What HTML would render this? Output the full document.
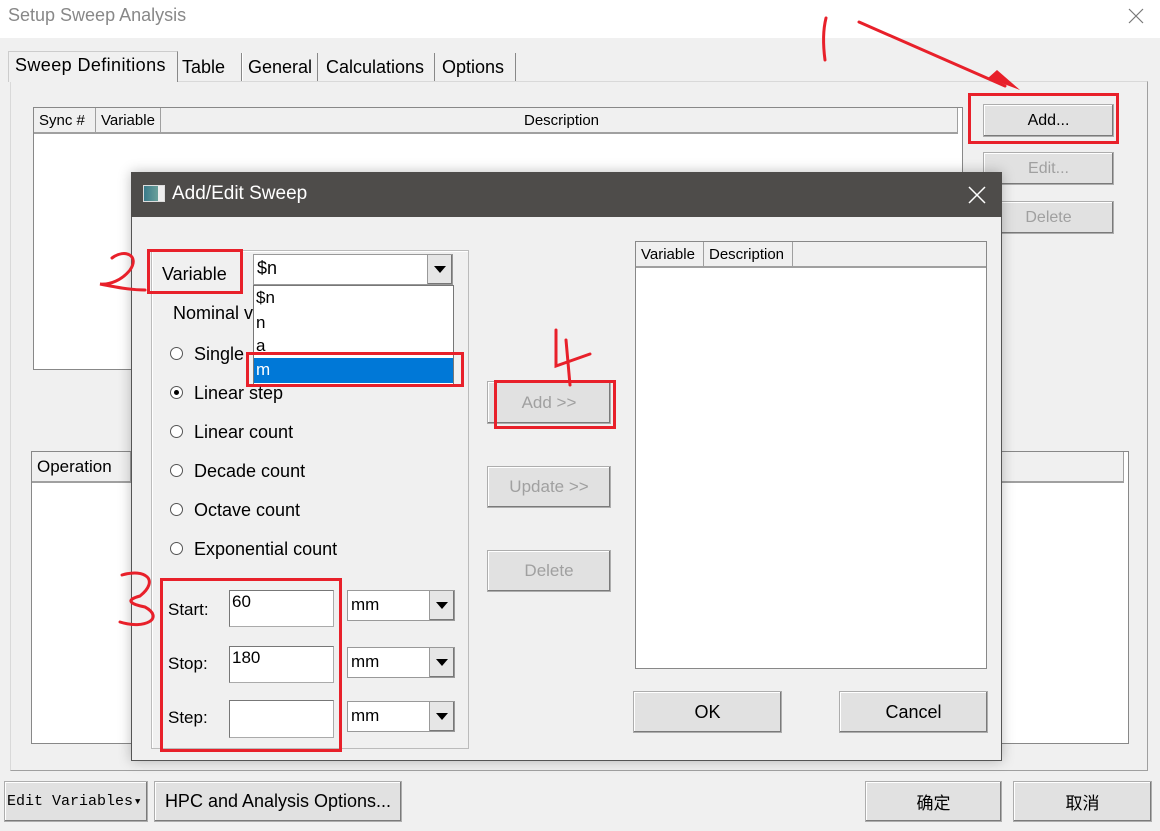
<!DOCTYPE html>
<html><head><meta charset="utf-8"><style>
*{box-sizing:border-box;margin:0;padding:0}
body{width:1160px;height:831px;background:#f0f0f0;position:relative;overflow:hidden;font-family:"Liberation Sans","Noto Sans CJK SC",sans-serif;color:#000}
.a{position:absolute}
.t{position:absolute;white-space:nowrap}
.btn{position:absolute;background:#e1e1e1;border:1px solid #adadad;box-shadow:inset -1px -1px 0 #7a7a7a,inset 1px 1px 0 #fff;display:flex;align-items:center;justify-content:center;font-size:16px}
.dis{color:#a0a0a0}
.hdr{position:absolute;background:#f0f0f0;border-right:1px solid #a0a0a0;border-bottom:2px solid #a0a0a0;font-size:15px;padding-left:5px;display:flex;align-items:center}
.red{position:absolute;border:3px solid #e8202a}
.radio{position:absolute;width:13px;height:13px;border-radius:50%;border:1px solid #555;background:#fff}
.inp{position:absolute;background:#fff;border:1px solid #aaa;border-top-color:#777;border-left-color:#777;font-size:16px;padding:1px 0 0 2px}
.cmb{position:absolute;background:#fff;border:1px solid #999;font-size:16px;padding:4px 0 0 3px}
.cmb .ar{position:absolute;right:0;top:0;bottom:0;width:25px;background:#e6e6e6;border-left:1px solid #999;box-shadow:inset -1px -1px 0 #777}
.cmb .ar:after{content:"";position:absolute;left:6px;top:11px;border-left:6px solid transparent;border-right:6px solid transparent;border-top:7px solid #000}
</style></head><body>
<div class="a" style="left:0;top:0;width:1160px;height:38px;background:#fff"></div>
<div class="t" style="left:8px;top:5px;font-size:18px;color:#888">Setup Sweep Analysis</div>
<svg class="a" style="left:1128px;top:8px" width="16" height="16"><path d="M1 1L15 15M15 1L1 15" stroke="#777" stroke-width="1.2"/></svg>

<!-- tab panel -->
<div class="a" style="left:10px;top:81px;width:1138px;height:690px;border:1px solid #d9d9d9;border-right-color:#a0a0a0;border-bottom-color:#a0a0a0"></div>
<div class="a" style="left:8px;top:51px;width:170px;height:31px;background:#f0f0f0;border:1px solid #ccc;border-bottom:none;border-right-color:#888"></div>
<div class="t" style="left:15px;top:55px;font-size:18px;letter-spacing:0.4px">Sweep Definitions</div>
<div class="a" style="left:178px;top:53px;width:64px;height:28px;border-right:1px solid #888"></div>
<div class="t" style="left:182px;top:57px;font-size:18px">Table</div>
<div class="a" style="left:242px;top:53px;width:76px;height:28px;border-right:1px solid #888;border-left:1px solid #fff"></div>
<div class="t" style="left:248px;top:57px;font-size:18px">General</div>
<div class="a" style="left:318px;top:53px;width:117px;height:28px;border-right:1px solid #888"></div>
<div class="t" style="left:326px;top:57px;font-size:18px">Calculations</div>
<div class="a" style="left:435px;top:53px;width:81px;height:28px;border-right:1px solid #888"></div>
<div class="t" style="left:442px;top:57px;font-size:18px">Options</div>

<!-- table 1 -->
<div class="a" style="left:33px;top:107px;width:930px;height:263px;background:#fff;border:1px solid #888"></div>
<div class="hdr" style="left:34px;top:108px;width:62px;height:26px">Sync #</div>
<div class="hdr" style="left:96px;top:108px;width:65px;height:26px">Variable</div>
<div class="hdr" style="left:161px;top:108px;width:797px;height:26px;justify-content:center">Description</div>
<div class="btn" style="left:983px;top:104px;width:131px;height:33px">Add...</div>
<div class="btn dis" style="left:983px;top:152px;width:131px;height:33px">Edit...</div>
<div class="btn dis" style="left:983px;top:201px;width:131px;height:33px">Delete</div>
<div class="red" style="left:968px;top:93px;width:151px;height:51px"></div>

<!-- table 2 -->
<div class="a" style="left:31px;top:451px;width:1098px;height:293px;background:#fff;border:1px solid #888"></div>
<div class="hdr" style="left:32px;top:452px;width:99px;height:31px;font-size:17px">Operation</div>
<div class="hdr" style="left:131px;top:452px;width:993px;height:31px"></div>

<!-- bottom -->
<div class="btn" style="left:4px;top:781px;width:144px;height:41px;font-family:'Liberation Mono',monospace;font-size:15px;justify-content:flex-start;padding-left:2px">Edit Variables<span style="font-size:9px;margin-left:2px">▼</span></div>
<div class="btn" style="left:154px;top:781px;width:248px;height:41px;font-size:18px">HPC and Analysis Options...</div>
<div class="btn" style="left:865px;top:781px;width:137px;height:41px;font-size:17px">确定</div>
<div class="btn" style="left:1013px;top:781px;width:139px;height:41px;font-size:17px">取消</div>

<!-- dialog -->
<div class="a" style="left:131px;top:172px;width:871px;height:589px;background:#f0f0f0;border:1px solid #555;box-shadow:0 0 12px rgba(0,0,0,.25)"></div>
<div class="a" style="left:131px;top:172px;width:871px;height:45px;background:#4e4c4a"></div>
<div class="a" style="left:143px;top:185px;width:22px;height:17px;background:linear-gradient(90deg,#3a7a8a,#7fb0a0);border:1px solid #ddd"></div>
<div class="a" style="left:158px;top:186px;width:6px;height:15px;background:#eee"></div>
<div class="t" style="left:172px;top:183px;font-size:19px;color:#fff">Add/Edit Sweep</div>
<svg class="a" style="left:968px;top:186px" width="18" height="18"><path d="M1 1L17 17M17 1L1 17" stroke="#fff" stroke-width="1.5"/></svg>

<div class="a" style="left:151px;top:250px;width:318px;height:499px;border:1px solid #bbb;box-shadow:inset 1px 1px 0 #fff"></div>
<div class="t" style="left:162px;top:264px;font-size:18px">Variable</div>
<div class="red" style="left:147px;top:249px;width:96px;height:45px"></div>
<div class="cmb" style="left:253px;top:254px;width:200px;height:31px;font-size:18px;padding-top:3px">$n<div class="ar"></div></div>
<div class="t" style="left:173px;top:303px;font-size:18px">Nominal v</div>
<div class="a" style="left:253px;top:285px;width:201px;height:101px;background:#fff;border:1px solid #777"></div>
<div class="t" style="left:256px;top:288px;font-size:17px">$n</div>
<div class="t" style="left:256px;top:313px;font-size:17px">n</div>
<div class="t" style="left:256px;top:336px;font-size:17px">a</div>
<div class="a" style="left:254px;top:358px;width:199px;height:25px;background:#0078d7"></div>
<div class="t" style="left:256px;top:360px;font-size:17px;color:#fff">m</div>
<div class="red" style="left:246px;top:352px;width:218px;height:35px"></div>

<div class="radio" style="left:170px;top:347px"></div><div class="t" style="left:194px;top:344px;font-size:18px">Single</div>
<div class="radio" style="left:170px;top:386px"></div><div class="a" style="left:174px;top:390px;width:5px;height:5px;border-radius:50%;background:#000"></div><div class="t" style="left:194px;top:383px;font-size:18px">Linear step</div>
<div class="radio" style="left:170px;top:425px"></div><div class="t" style="left:194px;top:422px;font-size:18px">Linear count</div>
<div class="radio" style="left:170px;top:464px"></div><div class="t" style="left:194px;top:461px;font-size:18px">Decade count</div>
<div class="radio" style="left:170px;top:503px"></div><div class="t" style="left:194px;top:500px;font-size:18px">Octave count</div>
<div class="radio" style="left:170px;top:542px"></div><div class="t" style="left:194px;top:539px;font-size:18px">Exponential count</div>

<div class="t" style="left:168px;top:600px;font-size:17px">Start:</div>
<div class="inp" style="left:229px;top:590px;width:105px;height:37px;font-size:17px">60</div>
<div class="cmb" style="left:347px;top:590px;width:108px;height:31px;font-size:17px">mm<div class="ar"></div></div>
<div class="t" style="left:168px;top:654px;font-size:17px">Stop:</div>
<div class="inp" style="left:229px;top:646px;width:105px;height:37px;font-size:17px">180</div>
<div class="cmb" style="left:347px;top:647px;width:108px;height:31px;font-size:17px">mm<div class="ar"></div></div>
<div class="t" style="left:168px;top:708px;font-size:17px">Step:</div>
<div class="inp" style="left:229px;top:700px;width:105px;height:38px"></div>
<div class="cmb" style="left:347px;top:701px;width:108px;height:31px;font-size:17px">mm<div class="ar"></div></div>
<div class="red" style="left:160px;top:578px;width:182px;height:174px"></div>

<div class="btn dis" style="left:487px;top:381px;width:124px;height:43px;font-size:17px">Add &gt;&gt;</div>
<div class="red" style="left:494px;top:380px;width:122px;height:49px"></div>
<div class="btn dis" style="left:487px;top:466px;width:124px;height:42px;font-size:17px">Update &gt;&gt;</div>
<div class="btn dis" style="left:487px;top:550px;width:124px;height:42px;font-size:17px">Delete</div>

<div class="a" style="left:635px;top:241px;width:352px;height:428px;background:#fff;border:1px solid #888"></div>
<div class="hdr" style="left:636px;top:242px;width:68px;height:26px">Variable</div>
<div class="hdr" style="left:704px;top:242px;width:89px;height:26px">Description</div>
<div class="hdr" style="left:793px;top:242px;width:193px;height:26px;border-right:none"></div>
<div class="btn" style="left:633px;top:691px;width:149px;height:42px;font-size:18px">OK</div>
<div class="btn" style="left:839px;top:691px;width:149px;height:42px;font-size:18px">Cancel</div>

<!-- annotations -->
<svg class="a" style="left:0;top:0" width="1160" height="831">
<g stroke="#e8202a" stroke-width="3" fill="none" stroke-linecap="round">
<path d="M826 18C823 30 823 45 825 60"/>
<path d="M859 22L1005 86"/>
<path d="M112 258C125 248 140 256 130 270C122 280 110 285 100 284C115 287 130 290 145 290"/>
<path d="M122 575C145 568 160 580 140 596C125 600 130 604 145 607C165 618 145 630 120 622"/>
<path d="M556 330L556 366L590 354M566 340L570 385"/>
</g>
<path d="M1020 90L988 78L997 70Z" fill="#e8202a"/>
</svg>
</body></html>
